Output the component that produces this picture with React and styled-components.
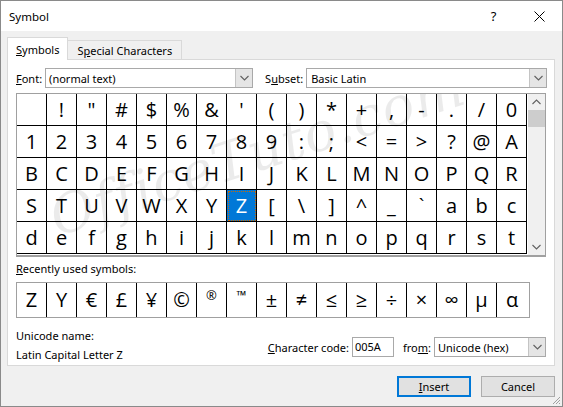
import React from 'react';
import styled, { createGlobalStyle } from 'styled-components';

const GlobalStyle = createGlobalStyle`
    html, body {
        margin: 0;
        padding: 0;
        background: #ffffff;
    }
    * {
        box-sizing: border-box;
    }
`;

const Window = styled.div`
    width: 563px;
    height: 407px;
    border: 1px solid #8a8a8a;
    background: #f0f0f0;
    font-family: "Noto Sans", "Open Sans", sans-serif;
    font-size: 11px;
    color: #000;
    display: flex;
    flex-direction: column;
    position: relative;
    overflow: hidden;
`;

const TitleBar = styled.div`
    height: 30px;
    background: #ffffff;
    display: flex;
    align-items: center;
    padding-left: 8px;

    span.title {
        flex: 1;
        font-size: 11.5px;
    }
`;

const TitleButton = styled.div`
    width: ${(p) => p.w}px;
    height: 30px;
    display: flex;
    align-items: center;
    justify-content: center;
    font-size: 13px;
`;

const Body = styled.div`
    flex: 1;
    padding: 7px 7px 0 6px;
    display: flex;
    flex-direction: column;
`;

const Tabs = styled.div`
    display: flex;
    align-items: flex-end;
    height: 22px;
    margin-bottom: -1px;
    position: relative;
    z-index: 1;
`;

const Tab = styled.div`
    height: ${(p) => (p.active ? 23 : 20)}px;
    padding: 0 ${(p) => (p.active ? 8 : 9)}px;
    background: ${(p) => (p.active ? '#ffffff' : '#f0f0f0')};
    border: 1px solid #d9d9d9;
    border-bottom: ${(p) => (p.active ? 'none' : '1px solid #d9d9d9')};
    margin-left: ${(p) => (p.active ? 0 : -1)}px;
    display: flex;
    align-items: center;
    white-space: nowrap;
`;

const Panel = styled.div`
    background: #ffffff;
    border: 1px solid #d9d9d9;
    height: 307px;
    padding: 8px 0 0 8px;
    display: flex;
    flex-direction: column;
    position: relative;
`;

const U = styled.span`
    text-decoration: underline;
`;

const FieldRow = styled.div`
    display: flex;
    align-items: center;
    height: 20px;
`;

const Label = styled.span`
    white-space: nowrap;
    margin-right: ${(p) => p.gap || 3}px;
    margin-left: ${(p) => p.left || 0}px;
`;

const Combo = styled.div`
    width: ${(p) => p.w}px;
    height: 20px;
    border: 1px solid #a9a9a9;
    display: flex;
    align-items: center;
    background: #fff;

    span {
        flex: 1;
        padding-left: ${(p) => p.pad || 3}px;
        white-space: nowrap;
        overflow: hidden;
    }
`;

const DropButton = styled.div`
    width: 17px;
    height: 18px;
    background: #e5e5e5;
    border-left: 1px solid #c4c4c4;
    display: flex;
    align-items: center;
    justify-content: center;
`;

const GridBox = styled.div`
    margin-top: 5px;
    width: 530px;
    height: 164px;
    border: 1px solid #a0a0a0;
    border-bottom-width: 2px;
    display: flex;
    position: relative;
    overflow: hidden;
`;

const CharGrid = styled.div`
    display: grid;
    grid-template-columns: repeat(17, 30px);
    grid-template-rows: repeat(5, 32px);
    width: 510px;
    height: 160px;
`;

const Cell = styled.div`
    border-right: 1px solid #000;
    border-bottom: 1px solid #000;
    display: flex;
    align-items: center;
    justify-content: center;
    font-family: "Open Sans", "Noto Sans", sans-serif;
    font-size: 20px;
    line-height: 1;
    background: ${(p) => (p.selected ? '#0078d7' : 'transparent')};
    color: ${(p) => (p.selected ? '#ffffff' : '#000000')};
    outline: ${(p) => (p.selected ? '1px dotted #d06a00' : 'none')};
    outline-offset: -2px;
    position: relative;
    z-index: ${(p) => (p.selected ? 2 : 0)};
`;

const ScrollBar = styled.div`
    width: 17px;
    margin-left: 1px;
    background: #f0f0f0;
    display: flex;
    flex-direction: column;
    align-items: center;
`;

const ScrollArrow = styled.div`
    height: 16px;
    width: 17px;
    display: flex;
    align-items: center;
    justify-content: center;
`;

const Thumb = styled.div`
    width: 17px;
    height: 17px;
    background: #cdcdcd;
`;

const ScrollSpace = styled.div`
    flex: 1;
`;

const Watermark = styled.div`
    position: absolute;
    left: 44px;
    top: 94px;
    font-family: "DejaVu Serif", serif;
    font-style: italic;
    font-size: 54px;
    line-height: 60px;
    letter-spacing: 1px;
    color: rgba(0, 0, 0, 0.08);
    transform: rotate(-18deg);
    transform-origin: left bottom;
    pointer-events: none;
    white-space: nowrap;
    z-index: 3;
`;

const SectionLabel = styled.div`
    margin-top: 4px;
    height: 16px;
    line-height: 16px;
`;

const RecentRow = styled.div`
    margin-top: 5px;
    display: grid;
    grid-template-columns: repeat(17, 30px);
    width: 514px;
    height: 36px;
    border: 1px solid #a0a0a0;
`;

const RecentCell = styled.div`
    border-right: ${(p) => (p.last ? 'none' : '1px solid #000')};
    display: flex;
    align-items: center;
    justify-content: center;
    font-family: "Open Sans", "Noto Sans", sans-serif;
    font-size: ${(p) => p.size || 20}px;
    line-height: 1;
    padding-bottom: ${(p) => p.raise || 0}px;
`;

const InfoRow = styled.div`
    display: flex;
    margin-top: 10px;
`;

const NameBlock = styled.div`
    flex: 1;
    display: flex;
    flex-direction: column;
    gap: 3px;

    div {
        height: 16px;
        line-height: 16px;
    }
`;

const CodeRow = styled.div`
    display: flex;
    align-items: center;
    height: 20px;
    margin-top: 9px;
    margin-right: 8px;
`;

const CodeInput = styled.div`
    width: 42px;
    height: 20px;
    border: 1px solid #a9a9a9;
    padding-left: 2px;
    line-height: 18px;
`;

const Footer = styled.div`
    display: flex;
    justify-content: flex-end;
    gap: 10px;
    padding-top: 10px;
`;

const Button = styled.div`
    width: ${(p) => p.w}px;
    height: 21px;
    background: #e1e1e1;
    border: ${(p) => (p.primary ? '2px solid #0078d7' : '1px solid #adadad')};
    display: flex;
    align-items: center;
    justify-content: center;
`;

const Grip = styled.svg`
    position: absolute;
    right: 1px;
    bottom: 1px;
`;

const Chevron = ({ up }) => (
    <svg width="9" height="6" viewBox="0 0 9 6">
        <path
            d={up ? 'M0.5 5 L4.5 1 L8.5 5' : 'M0.5 1 L4.5 5 L8.5 1'}
            fill="none"
            stroke="#606060"
            strokeWidth="1.1"
        />
    </svg>
);

const recent = [
    { c: 'Z' }, { c: 'Y' }, { c: '€' }, { c: '£' }, { c: '¥' }, { c: '©' },
    { c: '®', size: 13, raise: 10 }, { c: '™', size: 13, raise: 10 },
    { c: '±' }, { c: '≠' }, { c: '≤' }, { c: '≥' }, { c: '÷' }, { c: '×' },
    { c: '∞' }, { c: 'µ' }, { c: 'α' },
];

const chars = Array.from({ length: 85 }, (_, i) => String.fromCharCode(32 + i));

const App = () => {
    return (
        <>
            <GlobalStyle />
            <Window>
                <TitleBar>
                    <span className="title">Symbol</span>
                    <TitleButton w={45}>?</TitleButton>
                    <TitleButton w={46}>
                        <svg width="11" height="11" viewBox="0 0 11 11">
                            <path d="M0.5 0.5 L10.5 10.5 M10.5 0.5 L0.5 10.5" stroke="#000" strokeWidth="1" />
                        </svg>
                    </TitleButton>
                </TitleBar>
                <Body>
                    <Tabs>
                        <Tab active><U>S</U>ymbols</Tab>
                        <Tab>S<U>p</U>ecial Characters</Tab>
                    </Tabs>
                    <Panel>
                        <FieldRow>
                            <Label><U>F</U>ont:</Label>
                            <Combo w={208}>
                                <span>(normal text)</span>
                                <DropButton><Chevron /></DropButton>
                            </Combo>
                            <Label left={12}>S<U>u</U>bset:</Label>
                            <Combo w={241} pad={4}>
                                <span>Basic Latin</span>
                                <DropButton><Chevron /></DropButton>
                            </Combo>
                        </FieldRow>
                        <GridBox>
                            <CharGrid>
                                {chars.map((ch, i) => (
                                    <Cell key={i} selected={ch === 'Z'}>{ch}</Cell>
                                ))}
                            </CharGrid>
                            <ScrollBar>
                                <ScrollArrow><Chevron up /></ScrollArrow>
                                <Thumb />
                                <ScrollSpace />
                                <ScrollArrow><Chevron /></ScrollArrow>
                            </ScrollBar>
                            <Watermark>OfficeTuto.com</Watermark>
                        </GridBox>
                        <SectionLabel><U>R</U>ecently used symbols:</SectionLabel>
                        <RecentRow>
                            {recent.map((r, i) => (
                                <RecentCell key={i} size={r.size} raise={r.raise} last={i === recent.length - 1}>
                                    {r.c}
                                </RecentCell>
                            ))}
                        </RecentRow>
                        <InfoRow>
                            <NameBlock>
                                <div>Unicode name:</div>
                                <div>Latin Capital Letter Z</div>
                            </NameBlock>
                            <CodeRow>
                                <Label><U>C</U>haracter code:</Label>
                                <CodeInput>005A</CodeInput>
                                <Label left={9}>fro<U>m</U>:</Label>
                                <Combo w={112}>
                                    <span>Unicode (hex)</span>
                                    <DropButton><Chevron /></DropButton>
                                </Combo>
                            </CodeRow>
                        </InfoRow>
                    </Panel>
                    <Footer>
                        <Button primary w={74}><span><U>I</U>nsert</span></Button>
                        <Button w={74}>Cancel</Button>
                    </Footer>
                </Body>
                <Grip width="10" height="10" viewBox="0 0 10 10">
                    <path d="M9 2 L2 9 M9 5 L5 9 M9 8 L8 9" stroke="#a0a0a0" strokeWidth="1" />
                </Grip>
            </Window>
        </>
    );
};

export default App;
